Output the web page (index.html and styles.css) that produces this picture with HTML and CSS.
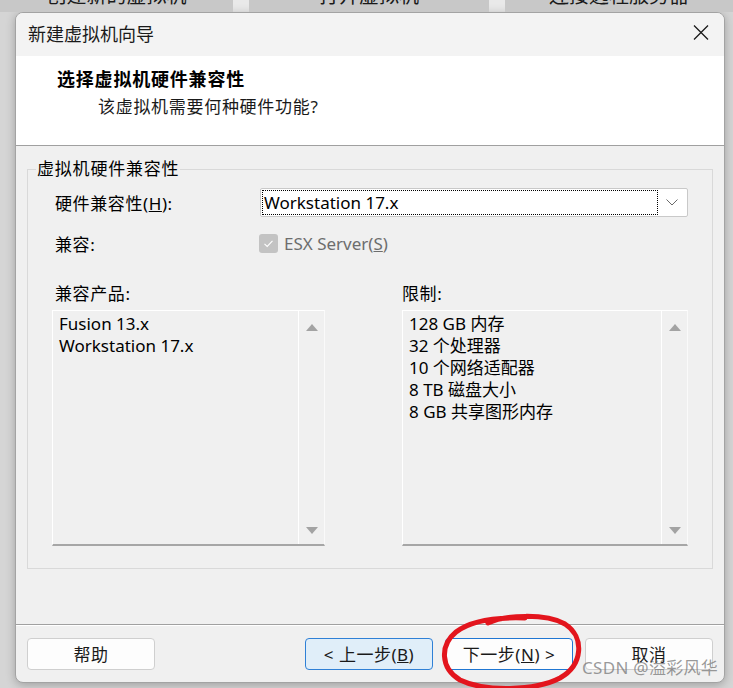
FILE: index.html
```html
<!DOCTYPE html>
<html lang="zh-CN">
<head>
    <meta charset="UTF-8">
    <title>新建虚拟机向导</title>
    <link rel="stylesheet" href="styles.css">
</head>
<body>
    <div class="tabs">
        <div class="tab"><span>创建新的虚拟机</span></div>
        <div class="tab tab-mid"><span>打开虚拟机</span></div>
        <div class="tab tab-last"><span>连接远程服务器</span></div>
    </div>

    <div class="dialog">
        <div class="titlebar">
            <span class="title">新建虚拟机向导</span>
            <svg class="close" width="16" height="15" viewBox="0 0 16 15">
                <path d="M1 0.5 L15 14.5 M15 0.5 L1 14.5" stroke="#1a1a1a" stroke-width="1.3" fill="none"/>
            </svg>
        </div>

        <div class="header">
            <div class="header-title">选择虚拟机硬件兼容性</div>
            <div class="header-sub">该虚拟机需要何种硬件功能?</div>
        </div>

        <div class="content">
            <fieldset class="group">
                <legend>虚拟机硬件兼容性</legend>

                <div class="row row-first">
                    <span class="row-label">硬件兼容性(<u>H</u>):</span>
                    <div class="combo">
                        <div class="combo-value">Workstation 17.x</div>
                        <div class="combo-arrow">
                            <svg width="12" height="7" viewBox="0 0 12 7">
                                <path d="M0.5 0.5 L6 6 L11.5 0.5" stroke="#6a6a6a" stroke-width="1" fill="none"/>
                            </svg>
                        </div>
                    </div>
                </div>

                <div class="row row-check">
                    <span class="row-label">兼容:</span>
                    <div class="check">
                        <span class="check-box">
                            <svg width="19" height="19" viewBox="0 0 19 19">
                                <path d="M5.5 9.8 L8.2 12.4 L13.5 6.8" stroke="#fff" stroke-width="1.1" fill="none"/>
                            </svg>
                        </span>
                        <span class="check-text">ESX Server(<u>S</u>)</span>
                    </div>
                </div>

                <div class="lists">
                    <div class="list-col list-col-first">
                        <div class="list-label">兼容产品:</div>
                        <div class="listbox">
                            <div class="list-items">
                                <div>Fusion 13.x</div>
                                <div>Workstation 17.x</div>
                            </div>
                            <div class="scroll">
                                <svg width="12" height="8" viewBox="0 0 12 8"><path d="M0 8 L6 1 L12 8 Z" fill="#a3a3a3"/></svg>
                                <svg width="12" height="8" viewBox="0 0 12 8"><path d="M0 0 L6 7 L12 0 Z" fill="#a3a3a3"/></svg>
                            </div>
                        </div>
                    </div>
                    <div class="list-col list-col-second">
                        <div class="list-label">限制:</div>
                        <div class="listbox">
                            <div class="list-items">
                                <div>128 GB 内存</div>
                                <div>32 个处理器</div>
                                <div>10 个网络适配器</div>
                                <div>8 TB 磁盘大小</div>
                                <div>8 GB 共享图形内存</div>
                            </div>
                            <div class="scroll">
                                <svg width="12" height="8" viewBox="0 0 12 8"><path d="M0 8 L6 1 L12 8 Z" fill="#a3a3a3"/></svg>
                                <svg width="12" height="8" viewBox="0 0 12 8"><path d="M0 0 L6 7 L12 0 Z" fill="#a3a3a3"/></svg>
                            </div>
                        </div>
                    </div>
                </div>
            </fieldset>
        </div>

        <div class="footer">
            <button class="btn">帮助</button>
            <div class="nav">
                <button class="btn btn-back">&lt; 上一步(<u>B</u>)</button>
                <button class="btn btn-next">下一步(<u>N</u>) &gt;</button>
                <button class="btn">取消</button>
            </div>
        </div>
    </div>

    <div class="watermark">CSDN @溢彩风华</div>

    <!-- red pen mark around the next button -->
    <svg class="scribble" width="733" height="688" viewBox="0 0 733 688">
        <path d="M488 623 C505 615, 545 613, 565 624 C585 637, 583 665, 560 678 C535 691, 485 692, 460 680 C440 668, 440 645, 456 632 C470 621, 495 617, 525 618"
              stroke="#e3151d" stroke-width="5" fill="none" stroke-linecap="round" stroke-linejoin="round"/>
    </svg>
</body>
</html>
```

FILE: styles.css
```css
body {
    margin: 0;
    width: 733px;
    height: 688px;
    overflow: hidden;
    position: relative;
    background-color: #d5d5d5;
    font-family: 'Noto Sans', 'Noto Sans CJK SC', sans-serif;
    font-size: 17px;
    color: #000000;
}

/* tabs of the main window, mostly hidden behind the dialog */
.tabs {
    display: flex;
    gap: 16px;
    height: 12px;
    overflow: hidden;
    background-color: #e9e9e9;
}
.tab {
    width: 233px;
    background-color: #c8c8c8;
    text-align: center;
    font-family: 'Noto Sans CJK SC', sans-serif;
    font-size: 20px;
    color: #1a1a1a;
}
.tab-mid {
    width: 240px;
}
.tab-last {
    flex: 1;
}
.tab span {
    display: block;
    line-height: 28px;
    margin-top: -19px;
}

.dialog {
    margin-left: 15px;
    width: 708px;
    height: 669px;
    border: 1px solid #a3a3a3;
    border-radius: 8px;
    background-color: #f0f0f0;
    box-shadow: 0 2px 10px rgba(0,0,0,0.25);
    display: flex;
    flex-direction: column;
    overflow: hidden;
}

.titlebar {
    flex-shrink: 0;
    box-sizing: border-box;
    height: 43px;
    background-color: #f3f3f3;
    display: flex;
    align-items: center;
    justify-content: space-between;
    padding: 0 15px 4px 12px;
}
.titlebar .title {
    font-family: 'Noto Sans CJK SC', sans-serif;
    font-size: 18px;
    line-height: 24px;
    color: #1a1a1a;
}

.header {
    flex-shrink: 0;
    height: 77px;
    background-color: #ffffff;
    border-bottom: 1px solid #a0a0a0;
    padding: 12px 0 0 41px;
}
.header-title {
    font-weight: bold;
    font-size: 18px;
    line-height: 22px;
    letter-spacing: 0.8px;
}
.header-sub {
    margin: 6px 0 0 41px;
    line-height: 22px;
    letter-spacing: 0.7px;
    color: #1a1a1a;
}

.content {
    flex: 1;
    padding: 12px 11px 0;
}
.group {
    margin: 0;
    padding: 0 0 22px;
    border: 1px solid #d9d9d9;
    min-width: 0;
}
.group legend {
    margin-left: 8px;
    padding: 0 1px;
    line-height: 22px;
    letter-spacing: 0.8px;
}

.row {
    display: grid;
    grid-template-columns: 205px 428px;
    align-items: center;
    padding-left: 27px;
}
.row-label {
    letter-spacing: 0.6px;
}
.row-first {
    margin-top: 8px;
    height: 29px;
}
.row-check {
    margin-top: 14px;
    height: 19px;
}

.combo {
    box-sizing: border-box;
    height: 29px;
    border: 1px solid #c9c9c9;
    border-radius: 2px;
    background-color: #ffffff;
    display: flex;
    padding: 1px;
}
.combo-value {
    flex: 1;
    border: 1px dotted #000000;
    line-height: 23px;
    padding-left: 1px;
}
.combo-arrow {
    width: 28px;
    display: flex;
    align-items: center;
    justify-content: center;
}

.check {
    display: flex;
    align-items: center;
    gap: 6px;
    margin-left: -1px;
}
.check-box {
    width: 19px;
    height: 19px;
    border-radius: 3px;
    background-color: #c3c3c3;
    display: flex;
}
.check-text {
    color: #6d6d6d;
    line-height: 22px;
}

.lists {
    display: flex;
    gap: 77px;
    margin-top: 33px;
    padding-left: 24px;
}
.list-col-first {
    width: 273px;
}
.list-col-first .list-label {
    padding-left: 3px;
}
.list-col-second {
    width: 286px;
}
.list-label {
    line-height: 22px;
    margin-bottom: 5px;
    letter-spacing: 0.6px;
}
.listbox {
    box-sizing: border-box;
    height: 236px;
    display: flex;
    background-color: #f0f0f0;
    border-top: 1px solid #ffffff;
    border-left: 1px solid #ffffff;
    border-right: 1px solid #fafafa;
    border-bottom: 2px solid #a6a6a6;
}
.list-items {
    flex: 1;
    padding: 2px 0 0 6px;
    line-height: 22px;
}
.scroll {
    box-sizing: border-box;
    width: 26px;
    border-left: 1px solid #ffffff;
    display: flex;
    flex-direction: column;
    align-items: center;
    justify-content: space-between;
    padding: 12px 0 9px;
}

.footer {
    flex-shrink: 0;
    border-top: 1px solid #a0a0a0;
    box-shadow: inset 0 1px #ffffff;
    padding: 13px 11px 12px;
    display: flex;
    justify-content: space-between;
}
.nav {
    display: flex;
    gap: 12px;
}
.btn {
    box-sizing: border-box;
    width: 128px;
    height: 32px;
    padding: 0 0 2px;
    border: 1px solid #cfcfcf;
    border-radius: 4px;
    background-color: #fdfdfd;
    font-family: 'Noto Sans', 'Noto Sans CJK SC', sans-serif;
    font-size: 17px;
    color: #1a1a1a;
    letter-spacing: 0.5px;
}
.btn-back {
    background-color: #e0eef9;
    border-color: #2f80d6;
}
.btn-next {
    border-color: #1f76d2;
}

.watermark {
    position: absolute;
    left: 582px;
    top: 657px;
    font-size: 17px;
    line-height: 22px;
    color: rgba(120,120,120,0.75);
    letter-spacing: 0.3px;
}
.scribble {
    position: absolute;
    left: 0;
    top: 0;
    pointer-events: none;
}
```
